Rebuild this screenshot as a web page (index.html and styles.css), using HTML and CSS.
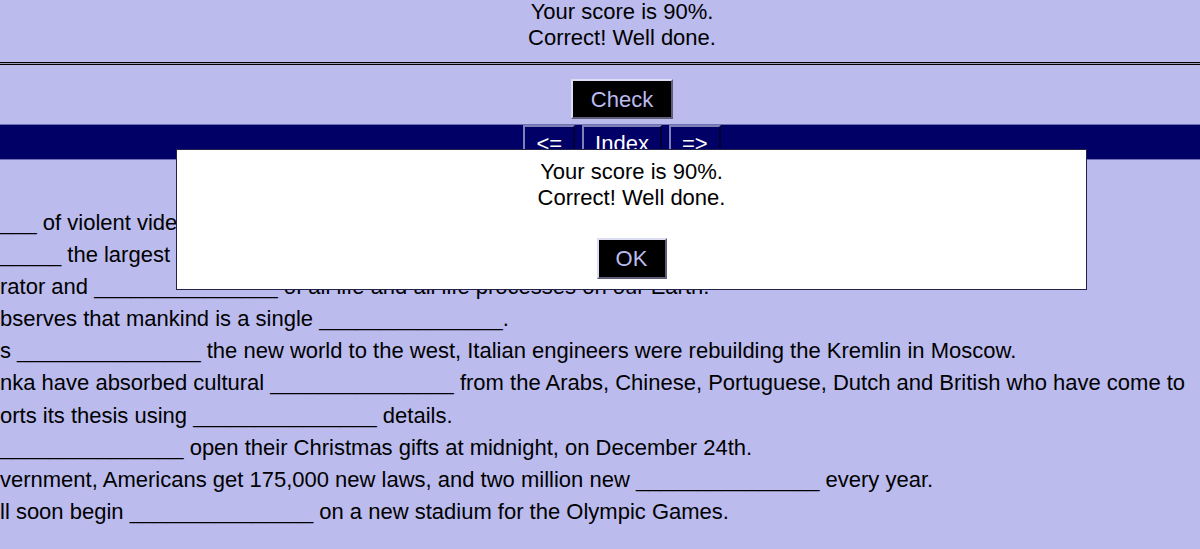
FILE: index.html
```html
<!DOCTYPE html>
<html lang="en">
<head>
<meta charset="utf-8">
<title>Gap-fill exercise</title>
<link rel="stylesheet" href="styles.css">
</head>
<body>
<div class="page">
  <div class="feedback-top">
    <div>Your score is 90%.</div>
    <div>Correct! Well done.</div>
  </div>
  <div class="double-rule"></div>
  <div class="check-row">
    <button class="func-btn check-btn" type="button">Check</button>
  </div>
  <div class="navbar">
    <button class="nav-btn" type="button">&lt;=</button>
    <button class="nav-btn" type="button">Index</button>
    <button class="nav-btn" type="button">=&gt;</button>
  </div>
  <div class="exercise">
    <div class="line">___ of violent video games on young children.</div>
    <div class="line">_____ the largest population of any country in the world.</div>
    <div class="line">rator and _______________ of all life and all life processes on our Earth.</div>
    <div class="line">bserves that mankind is a single _______________.</div>
    <div class="line">s _______________ the new world to the west, Italian engineers were rebuilding the Kremlin in Moscow.</div>
    <div class="line">nka have absorbed cultural _______________ from the Arabs, Chinese, Portuguese, Dutch and British who have come to</div>
    <div class="line">orts its thesis using _______________ details.</div>
    <div class="line">_______________ open their Christmas gifts at midnight, on December 24th.</div>
    <div class="line">vernment, Americans get 175,000 new laws, and two million new _______________ every year.</div>
    <div class="line">ll soon begin _______________ on a new stadium for the Olympic Games.</div>
  </div>
</div>
<div class="dialog">
  <div class="dialog-text">
    <div>Your score is 90%.</div>
    <div>Correct! Well done.</div>
  </div>
  <button class="func-btn ok-btn" type="button">OK</button>
</div>
</body>
</html>
```

FILE: styles.css
```css
html, body {
  margin: 0;
  padding: 0;
}

body {
  width: 1200px;
  height: 549px;
  overflow: hidden;
  background: #bbbbee;
  color: #000000;
  font-family: "Liberation Sans", Arial, sans-serif;
  font-size: 22px;
  position: relative;
}

.page {
  width: 1244px;
}

.feedback-top {
  margin-top: -1px;
  line-height: 26px;
  text-align: center;
}

.double-rule {
  margin-top: 11px;
  height: 1px;
  background: #9a9ab4;
  border-top: 1px solid #000000;
  border-bottom: 1px solid #000000;
}

.check-row {
  margin-top: 14px;
  display: flex;
  justify-content: center;
}

.func-btn {
  box-sizing: border-box;
  background: #000000;
  color: #bbbbee;
  font-family: "Liberation Sans", Arial, sans-serif;
  font-size: 22px;
  line-height: 25px;
  border: 2px solid;
  border-color: #dcdcf2 #5e5e78 #5e5e78 #dcdcf2;
  margin: 0;
  cursor: pointer;
}

.check-btn {
  width: 102px;
  height: 40px;
  padding: 0;
}

.navbar {
  margin-top: 5px;
  height: 34px;
  background: #000066;
  border-top: 1px solid #7070b0;
  border-bottom: 1px solid #7070b0;
  display: flex;
  justify-content: center;
  gap: 7px;
}

.nav-btn {
  box-sizing: border-box;
  height: 34px;
  margin: 0;
  padding: 2px 11px 0;
  background: #000066;
  color: #ffffff;
  font-family: "Liberation Sans", Arial, sans-serif;
  font-size: 22px;
  line-height: 25px;
  border: 2px solid;
  border-color: #8080bb #000033 #000033 #8080bb;
  cursor: pointer;
}

.exercise {
  margin-top: 47px;
  line-height: 32.1px;
}

.line {
  white-space: nowrap;
  overflow: hidden;
}

.dialog {
  position: absolute;
  left: 176px;
  top: 149px;
  width: 911px;
  height: 141px;
  box-sizing: border-box;
  background: #ffffff;
  border: 1px solid #22224a;
  padding-top: 9px;
  display: flex;
  flex-direction: column;
  align-items: center;
}

.dialog-text {
  line-height: 26px;
  text-align: center;
}

.ok-btn {
  margin-top: 27px;
  width: 70px;
  height: 41px;
  padding: 0;
}
```
